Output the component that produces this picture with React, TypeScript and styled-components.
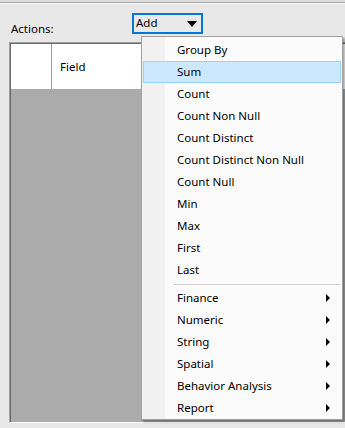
import React from "react";
import styled, { createGlobalStyle } from "styled-components";

const Global = createGlobalStyle`
  html, body {
    margin: 0;
    padding: 0;
    background: #e8e8e8;
    overflow: hidden;
  }
  body {
    font-family: "Noto Sans", "Open Sans", sans-serif;
    font-size: 11.5px;
    color: #000;
  }
`;

const Page = styled.div`
  position: relative;
  width: 345px;
  height: 428px;
  overflow: hidden;
`;

const TopRule = styled.div`
  height: 2px;
  background: #dcdcdc;
  border-bottom: 1px solid #a9a9a9;
  box-shadow: 0 1px 0 #f8f8f8;
`;

const Toolbar = styled.div`
  display: grid;
  grid-template-columns: 121px 71px;
  align-items: start;
  height: 39px;
  padding: 10px 0 0 11px;
  box-sizing: border-box;
`;

const Label = styled.span`
  margin-top: 8px;
  line-height: 16px;
`;

const DropButton = styled.div`
  box-sizing: border-box;
  height: 21px;
  border: 2px solid #0078d7;
  background: #e9e9e9;
  display: flex;
  align-items: center;
  justify-content: space-between;
  padding: 0 4px 1px 2px;
  line-height: 16px;
`;

const DownArrow = styled.span`
  width: 0;
  height: 0;
  margin-top: 1px;
  border-left: 5.5px solid transparent;
  border-right: 5.5px solid transparent;
  border-top: 6px solid #000;
`;

const Grid = styled.div`
  margin-left: 9px;
  width: 360px;
  height: 381px;
  box-sizing: border-box;
  border-top: 1px solid #a0a0a0;
  border-left: 1px solid #a0a0a0;
  border-bottom: 1px solid #ffffff;
  box-shadow: inset 1px 1px 0 #696969;
  padding: 1px 0 0 1px;
  display: flex;
  flex-direction: column;
  background: #ababab;
`;

const HeaderRow = styled.div`
  display: grid;
  grid-template-columns: 40px 1px 200px;
  height: 45px;
  background: #ffffff;
  flex: none;
`;

const CellDivider = styled.div`
  background: #a0a0a0;
`;

const HeaderCell = styled.div`
  display: flex;
  align-items: center;
  padding-left: 8px;
`;

const Menu = styled.div`
  position: absolute;
  left: 141px;
  top: 36px;
  width: 202px;
  box-sizing: border-box;
  border: 1px solid #a0a0a0;
  padding: 2px 0 0;
  background: linear-gradient(to right, #f1f1f1 0, #f1f1f1 23px, #fbfbfb 23px);
  box-shadow: 2px 2px 2px rgba(0, 0, 0, 0.35);
`;

const Item = styled.div<{ $active?: boolean }>`
  position: relative;
  height: 22px;
  box-sizing: border-box;
  margin: 0 1px;
  padding: 0 0 1px 33px;
  display: flex;
  align-items: center;
  border: 1px solid ${(p) => (p.$active ? "#99d1ff" : "transparent")};
  background: ${(p) => (p.$active ? "#cce8ff" : "transparent")};
`;

const SubArrow = styled.span`
  position: absolute;
  right: 10px;
  top: 50%;
  margin-top: -4px;
  width: 0;
  height: 0;
  border-top: 4px solid transparent;
  border-bottom: 4px solid transparent;
  border-left: 4px solid #000;
`;

const Separator = styled.div`
  height: 6px;
  display: flex;
  align-items: center;
  padding-left: 32px;
  margin-right: 2px;
  &::after {
    content: "";
    flex: 1;
    height: 1px;
    background: #cfcfcf;
  }
`;

const simple = [
  "Group By",
  "Sum",
  "Count",
  "Count Non Null",
  "Count Distinct",
  "Count Distinct Non Null",
  "Count Null",
  "Min",
  "Max",
  "First",
  "Last",
];

const groups = ["Finance", "Numeric", "String", "Spatial", "Behavior Analysis", "Report"];

export default function App() {
  return (
    <Page>
      <Global />
      <TopRule />
      <Toolbar>
        <Label>Actions:</Label>
        <DropButton>
          <span>Add</span>
          <DownArrow />
        </DropButton>
      </Toolbar>
      <Grid>
        <HeaderRow>
          <div />
          <CellDivider />
          <HeaderCell>Field</HeaderCell>
        </HeaderRow>
      </Grid>
      <Menu>
        {simple.map((s) => (
          <Item key={s} $active={s === "Sum"}>
            {s}
          </Item>
        ))}
        <Separator />
        {groups.map((g) => (
          <Item key={g}>
            {g}
            <SubArrow />
          </Item>
        ))}
      </Menu>
    </Page>
  );
}
